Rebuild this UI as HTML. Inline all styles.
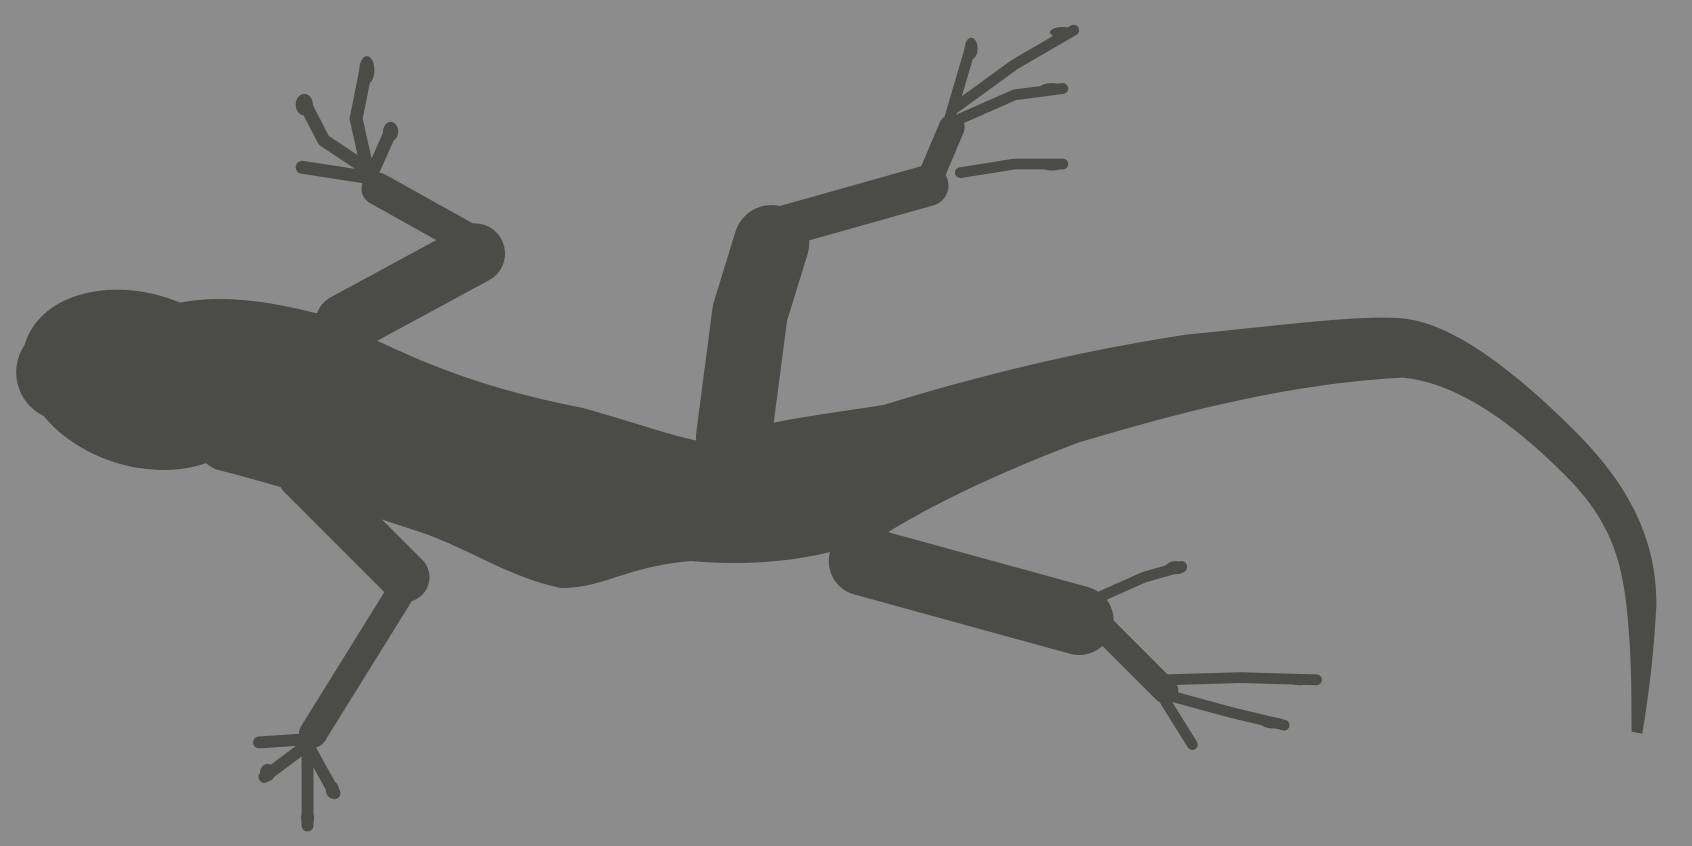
<!DOCTYPE html>
<html><head><meta charset="utf-8"><style>
html,body{margin:0;padding:0;background:#8c8c8c;overflow:hidden}
svg{display:block}
</style></head><body>
<svg width="1692" height="846" viewBox="0 0 1568 784" xmlns="http://www.w3.org/2000/svg">
<rect width="1568" height="784" fill="#8c8c8c"/>
<g fill="#4b4c47" stroke="#4b4c47" stroke-linecap="round" stroke-linejoin="round">
<ellipse cx="130" cy="352" rx="112" ry="80" transform="rotate(18 130 352)" stroke="none"/>
<ellipse cx="60" cy="345" rx="45" ry="45" stroke="none"/>
<path stroke="none" d="M150 285 C200 268 260 282 300 292 C360 320 420 355 540 378 C600 395 640 410 660 410 C700 390 760 385 820 375 C900 350 1000 325 1100 310 C1200 300 1260 292 1300 295 C1350 300 1410 350 1460 400 C1510 450 1535 500 1535 560 C1532 620 1525 660 1522 680 L1512 678 C1512 640 1512 590 1505 545 C1498 500 1480 470 1450 440 C1400 390 1350 355 1300 350 C1200 355 1100 380 1000 410 C920 440 860 470 820 495 C760 520 700 525 640 520 C580 525 560 545 520 545 C470 535 430 505 380 490 C320 470 260 450 200 435 C170 420 160 380 150 285 Z"/>
<g fill="none">
<path stroke-width="56" d="M320 300 L440 235"/>
<path stroke-width="30" d="M445 228 L350 175"/>
<path stroke-width="12" d="M345 165 L280 155 M345 160 L300 130 L282 95 M340 155 L330 110 L340 60 M345 160 L362 122"/>
<path stroke-width="46" d="M280 440 L375 535"/>
<path stroke-width="26" d="M380 535 L290 680"/>
<path stroke-width="11" d="M285 685 L240 688 M285 690 L245 720 M285 690 L285 765 M285 690 L310 735"/>
<path stroke-width="70" d="M680 405 L695 290 L715 225"/>
<path stroke-width="38" d="M725 210 L860 172"/>
<path stroke-width="24" d="M860 170 L882 118"/>
<path stroke-width="10" d="M880 110 L900 42 M885 100 L940 60 L995 28 M890 110 L940 88 L985 82 M890 160 L940 152 L985 152"/>
<path stroke-width="64" d="M800 520 L1000 575"/>
<path stroke-width="24" d="M1010 570 L1080 640"/>
<path stroke-width="10" d="M1015 555 L1060 535 L1095 525 M1080 630 L1150 628 L1220 630 M1085 645 L1140 660 L1190 672 M1080 650 L1105 690"/>
</g>
<g stroke="none">
<ellipse cx="340" cy="65" rx="7" ry="13"/><ellipse cx="282" cy="97" rx="8" ry="10"/><ellipse cx="362" cy="122" rx="7" ry="9"/>
<ellipse cx="900" cy="45" rx="6" ry="10"/><ellipse cx="985" cy="30" rx="12" ry="5"/><ellipse cx="975" cy="82" rx="12" ry="5"/><ellipse cx="975" cy="153" rx="12" ry="5"/>
<ellipse cx="1090" cy="526" rx="10" ry="6"/><ellipse cx="1205" cy="630" rx="14" ry="5"/><ellipse cx="1180" cy="670" rx="12" ry="5"/>
<ellipse cx="285" cy="758" rx="6" ry="10"/><ellipse cx="248" cy="716" rx="7" ry="8"/><ellipse cx="308" cy="732" rx="6" ry="8"/>
</g>
</g>
</svg>
</body></html>
